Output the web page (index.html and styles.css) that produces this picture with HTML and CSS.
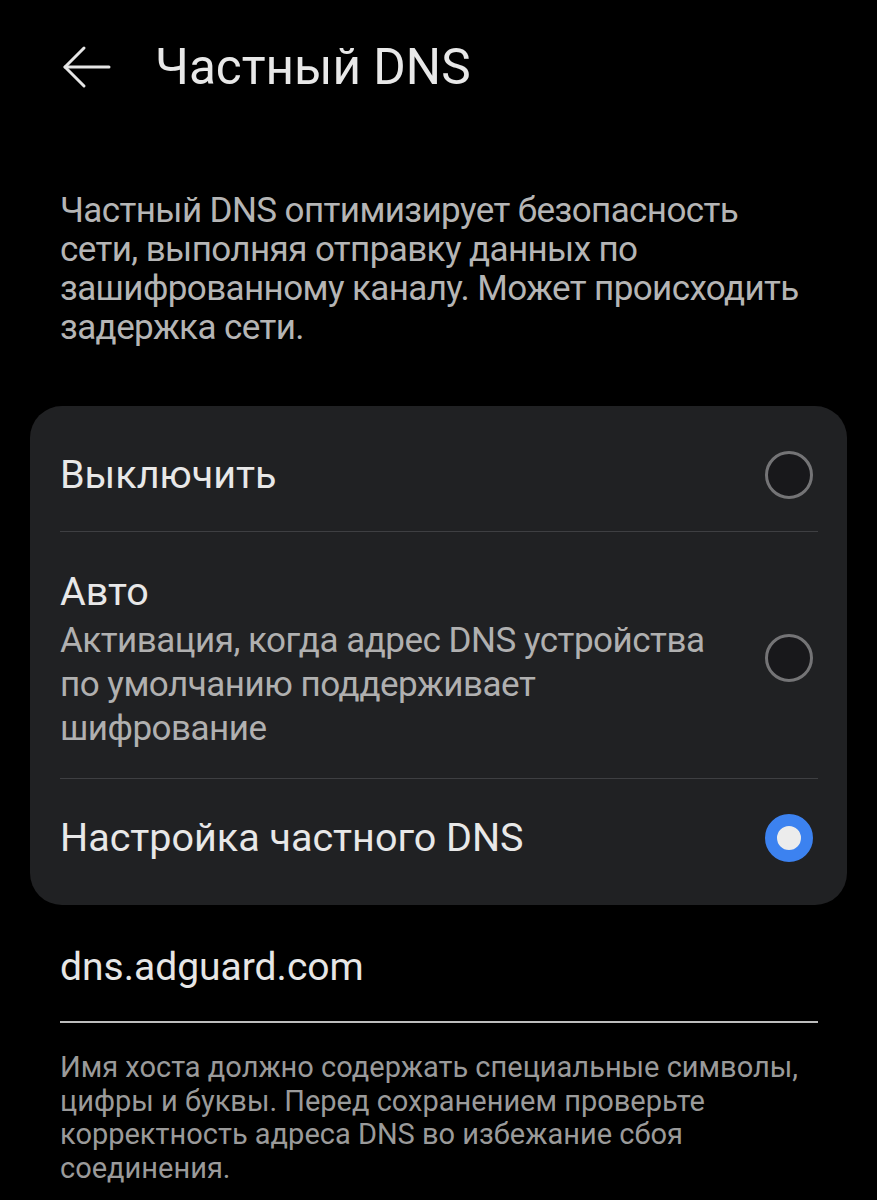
FILE: index.html
```html
<!DOCTYPE html>
<html lang="ru">
<head>
    <meta charset="UTF-8">
    <meta name="viewport" content="width=device-width, initial-scale=1.0">
    <title>Частный DNS</title>
    <link rel="stylesheet" href="styles.css">
</head>
<body>
    <header class="top-bar">
        <button type="button" class="back-button" aria-label="Назад">
            <svg width="50" height="44" viewBox="0 0 50 44" fill="none" stroke="#e6e6e6" stroke-width="3" stroke-linecap="round" stroke-linejoin="round">
                <path d="M47 22H3"/>
                <path d="M22 3L3 22L22 41"/>
            </svg>
        </button>
        <h1>Частный DNS</h1>
    </header>

    <p class="intro">Частный DNS оптимизирует безопасность сети, выполняя отправку данных по зашифрованному каналу. Может происходить задержка сети.</p>

    <div class="card">
        <label class="option option-single">
            <div class="option-text">
                <span class="option-title">Выключить</span>
            </div>
            <input type="radio" name="dns-mode" class="radio">
        </label>
        <label class="option option-multi">
            <div class="option-text">
                <span class="option-title">Авто</span>
                <span class="option-desc">Активация, когда адрес DNS устройства по умолчанию поддерживает шифрование</span>
            </div>
            <input type="radio" name="dns-mode" class="radio">
        </label>
        <label class="option option-single">
            <div class="option-text">
                <span class="option-title">Настройка частного DNS</span>
            </div>
            <input type="radio" name="dns-mode" class="radio" checked>
        </label>
    </div>

    <div class="host-field">
        <input type="text" class="host-input" value="dns.adguard.com">
    </div>

    <p class="hint">Имя хоста должно содержать специальные символы, цифры и буквы. Перед сохранением проверьте корректность адреса DNS во избежание сбоя соединения.</p>
</body>
</html>
```

FILE: styles.css
```css
body {
    margin: 0;
    padding: 0 30px;
    background-color: #000;
    color: #e6e6e6;
    font-family: Roboto, "Noto Sans", sans-serif;
}
.top-bar {
    display: flex;
    align-items: center;
    height: 134px;
    padding-left: 32px;
}
.back-button {
    background: none;
    border: none;
    padding: 0;
    margin-right: 43px;
    display: flex;
    cursor: pointer;
}
h1 {
    margin: 0;
    font-size: 49.5px;
    font-weight: 400;
    color: #e8e8e8;
}
.intro {
    margin: 57px 30px 0;
    font-size: 35px;
    line-height: 39px;
    letter-spacing: -0.6px;
    color: #b5b5b5;
}
.card {
    margin-top: 59px;
    background-color: #202123;
    border-radius: 32px;
    padding: 12px 29px 8px 30px;
}
.option {
    display: flex;
    align-items: center;
    gap: 50px;
    box-sizing: border-box;
    border-bottom: 1px solid #3e3f42;
    cursor: pointer;
}
.option:last-child {
    border-bottom: none;
}
.option-single {
    height: 114px;
}
.option-single:last-child {
    height: 118px;
}
.option-multi {
    padding: 33px 0 27px;
}
.option-text {
    flex: 1;
    display: flex;
    flex-direction: column;
}
.option-title {
    font-size: 39.5px;
    line-height: 48px;
    color: #e8e8e8;
}
.option-multi .option-title {
    line-height: 54px;
}
.option-desc {
    font-size: 35px;
    line-height: 44px;
    letter-spacing: -0.5px;
    color: #b0b0b0;
}
.radio {
    appearance: none;
    margin: 0 5px 0 0;
    width: 48px;
    height: 48px;
    border-radius: 50%;
    border: 3px solid #747476;
    background-color: #18181b;
    flex-shrink: 0;
    box-sizing: border-box;
}
.radio:checked {
    border: 12px solid #3c82f0;
    background-color: #ececec;
}
.host-field {
    margin: 0 29px 0 30px;
    padding-top: 39px;
    border-bottom: 2px solid #bdbdbd;
}
.host-input {
    display: block;
    width: 100%;
    height: 46px;
    background: none;
    border: none;
    outline: none;
    padding: 0;
    margin-bottom: 31px;
    font-family: inherit;
    font-size: 39px;
    color: #e6e6e6;
}
.hint {
    margin: 28px 30px 0;
    font-size: 29px;
    line-height: 33.5px;
    color: #9a9a9a;
}
```
